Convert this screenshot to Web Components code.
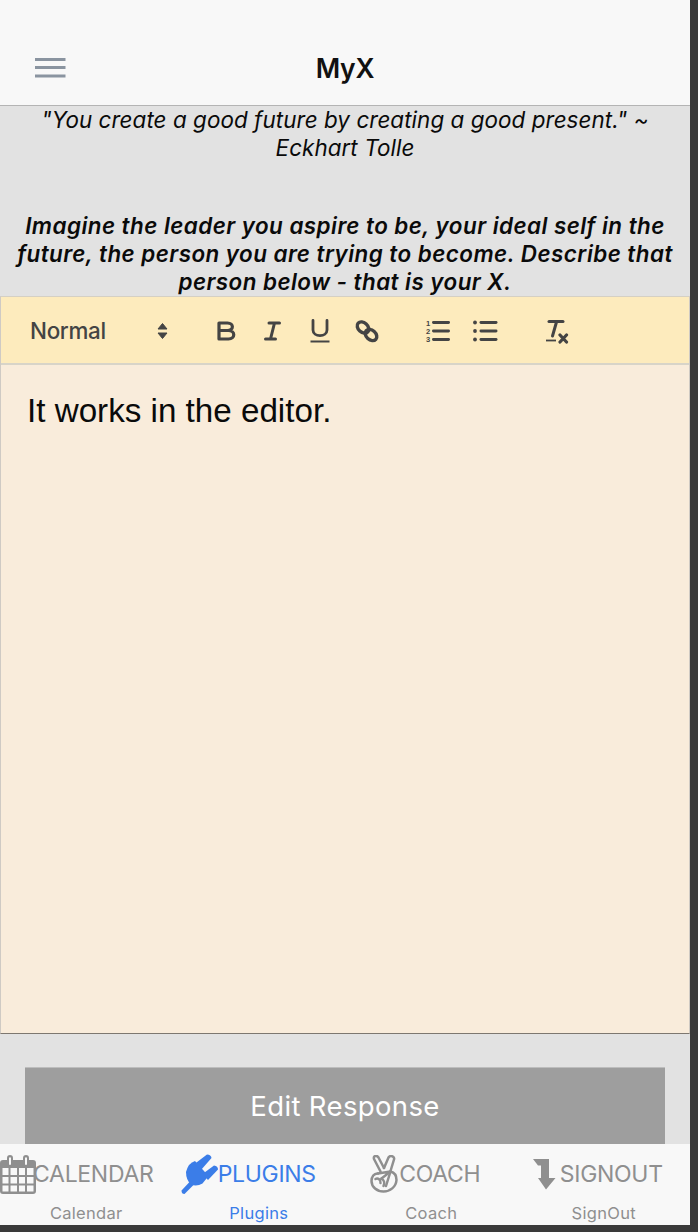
<!DOCTYPE html>
<html><head><meta charset="utf-8">
<style>
html,body{margin:0;padding:0;background:#3a3a3a;height:100%;overflow:hidden}
body{font-family:Inter,"Liberation Sans",sans-serif}
</style></head><body>
<my-app>
  <nav-header title="MyX"></nav-header>
  <quote-block>
    <p slot="quote">"You create a good future by creating a good present." ~ Eckhart Tolle</p>
    <p slot="prompt">Imagine the leader you aspire to be, your ideal self in the future, the person you are trying to become. Describe that person below - that is your X.</p>
  </quote-block>
  <rich-editor>It works in the editor.</rich-editor>
  <action-button>Edit Response</action-button>
  <tab-bar></tab-bar>
</my-app>
<script>
function def(name,html){
  customElements.define(name,class extends HTMLElement{
    constructor(){super();this.attachShadow({mode:'open'}).innerHTML=typeof html==='function'?html(this):html;}
    connectedCallback(){
      if(typeof html==='function')this.shadowRoot.innerHTML=html(this);
    }
  });
}
def('my-app',`<style>:host{display:flex;flex-direction:column;width:690px;height:1225px;background:#e2e2e2;overflow:hidden}</style><slot></slot>`);
def('nav-header',h=>`<style>
:host{display:flex;align-items:center;flex:none;box-sizing:border-box;height:106px;padding:31px 35px 0;background:#f8f8f8;border-bottom:1px solid #b4b4b4}
.m{display:block;flex:none}
h1{flex:1;margin:0 0 0 -31px;text-align:center;font:600 26.5px/1 Inter,"Liberation Sans",sans-serif;color:#111;letter-spacing:-.2px}
</style>
<svg class="m" width="31" height="21" viewBox="0 0 31 21"><g fill="#8a94a0"><rect y="0" width="30.5" height="3"/><rect y="8" width="30.5" height="3"/><rect y="16.5" width="30.5" height="3"/></g></svg>
<h1>${h.getAttribute('title')||''}</h1>`);
def('quote-block',`<style>
:host{display:block;flex:none;box-sizing:border-box;height:190px;padding:0 8px;text-align:center;color:#0a0a0a;font:italic 400 22.4px/28px Inter,"Liberation Sans",sans-serif;letter-spacing:.07px}
.q{height:106px}
.p{font-weight:600;letter-spacing:.47px}
::slotted(p){margin:0}
</style><div class="q"><slot name="quote"></slot></div><div class="p"><slot name="prompt"></slot></div>`);
const stroke='fill="none" stroke="#444" stroke-linecap="round" stroke-linejoin="round"';
def('rich-editor',`<style>
:host{display:flex;flex-direction:column;flex:none;box-sizing:border-box;height:738px;background:#f9ecdb;border:1px solid #cfcac4;border-bottom-color:#7d7770;border-top:1px solid #d5d0c4}
.bar{display:flex;align-items:center;flex:none;box-sizing:border-box;height:68px;padding-top:2px;background:#fdebbd;border-bottom:2px solid #d8d4c8;color:#444;padding-left:29px}
.sel{font:500 22.4px/1 Inter,"Liberation Sans",sans-serif;letter-spacing:-.3px;width:138px;display:flex;align-items:center;box-sizing:border-box}
.sel span{flex:1}
.tools{display:flex;align-items:center;margin-left:48px}
svg{display:block;flex:none}
.body{flex:1;padding:26px 26px;font:400 33.2px/40px "Liberation Sans",Arial,sans-serif;color:#0a0a0a}
</style>
<div class="bar">
<div class="sel"><span>Normal</span>
<svg width="11" height="18" viewBox="0 0 11 18"><path d="M5.500 1.500 L10 7 H1Z M5.500 16.500 L10 11 H1Z" fill="#444" stroke="#444" stroke-linejoin="round"/></svg></div>
<div class="tools">
<svg width="20" height="22" viewBox="0 0 20 22" ${stroke} stroke-width="3.2"><path d="M3 3H11.5C18 3 18 10.5 11.5 10.5H3Z M3 10.500H12.5C19.500 10.500 19.500 19 12.500 19H3Z"/></svg>
<svg style="margin-left:28px" width="17" height="22" viewBox="0 0 17 22" ${stroke} stroke-width="3"><path d="M5 3H15.5 M1.5 19H11.5 M10.5 3L6.5 19"/></svg>
<svg style="margin-left:28px" width="22" height="24" viewBox="0 0 22 24" ${stroke}><path d="M4 1.500V11C4 18.500 18 18.500 18 11V1.500" stroke-width="2.800"/><path d="M1.500 22.500H20.500" stroke-width="2" stroke-linecap="butt"/></svg>
<svg style="margin-left:24px" width="25" height="25" viewBox="0 0 25 25" ${stroke} stroke-width="3.400"><ellipse cx="8" cy="8.500" rx="6.500" ry="4.800" transform="rotate(42 8 8.500)"/><ellipse cx="16" cy="16" rx="6.500" ry="4.800" transform="rotate(42 16 16)"/></svg>
<svg style="margin-left:45px" width="26" height="24" viewBox="0 0 26 24"><g fill="#444"><rect x="7" y="2" width="18" height="3" rx="1.400"/><rect x="7" y="10.500" width="18" height="3" rx="1.400"/><rect x="7" y="19" width="18" height="3" rx="1.400"/></g><g font-family="Liberation Sans" font-size="7.500" font-weight="700" fill="#444" text-anchor="middle"><text x="3" y="6.500">1</text><text x="3" y="14.500">2</text><text x="3" y="23">3</text></g></svg>
<svg style="margin-left:22px" width="25" height="24" viewBox="0 0 25 24"><g fill="#444"><circle cx="2" cy="3.500" r="1.900"/><circle cx="2" cy="12" r="1.900"/><circle cx="2" cy="20.500" r="1.900"/><rect x="6.500" y="2" width="18" height="3" rx="1.400"/><rect x="6.500" y="10.500" width="18" height="3" rx="1.400"/><rect x="6.500" y="19" width="18" height="3" rx="1.400"/></g></svg>
<svg style="margin-left:47px" width="24" height="25" viewBox="0 0 24 25" ${stroke}><path d="M4 2.500H18" stroke-width="3"/><path d="M11.500 3L7.500 17" stroke-width="3"/><path d="M1 21.500H11" stroke-width="1.800" stroke-linecap="butt"/><path d="M15 16L21.500 23M21.500 16L15 23" stroke-width="3.200"/></svg>
</div></div>
<div class="body"><slot></slot></div>`);
def('action-button',`<style>
:host{display:flex;flex:none;box-sizing:border-box;height:110px;padding:33px 25px 0}
div{flex:1;display:flex;align-items:center;justify-content:center;box-sizing:border-box;padding-top:2px;background:#9e9e9e;color:#fff;font:400 27.5px/1 Inter,"Liberation Sans",sans-serif;letter-spacing:.35px;border-top:1px solid #bdbdbd}
</style><div><slot></slot></div>`);
const G='#8f8f8f',B='#3b7de8';
const icons={
cal:`<svg width="36" height="39" viewBox="0 0 36 39" style="margin-right:-3px"><path fill="${G}" fill-rule="evenodd" d="M3 5H7V3a3 3 0 0 1 6 0V5H23V3a3 3 0 0 1 6 0V5H33a3 3 0 0 1 3 3V36a3 3 0 0 1-3 3H3a3 3 0 0 1-3-3V8a3 3 0 0 1 3-3ZM9 2.500V9a1 1 0 0 0 2 0V2.500ZM25 2.500V9a1 1 0 0 0 2 0V2.500ZM2.500 13V20H8.500V13ZM10.500 13V20H17V13ZM19 13V20H25V13ZM27 13V20H33.500V13ZM2.500 22V28.500H8.500V22ZM10.500 22V28.500H17V22ZM19 22V28.500H25V22ZM27 22V28.500H33.500V22ZM2.500 30.500V36.500H8.500V30.500ZM10.500 30.500V36.500H17V30.500ZM19 30.500V36.500H25V30.500ZM27 30.500V36.500H33.500V30.500Z"/></svg>`,
plug:`<svg width="37" height="41" viewBox="0 0 37 41"><g fill="${B}"><path d="M0.500 36.500L9 27.500L12.500 31L3.500 40Q0.500 40 0.500 36.500Z"/><path d="M8 11Q11 8 14 7L27.500 22L21.500 29.500Q15.500 33 10 30.500Q5 26 5 18Q6 14 8 11Z"/><path d="M13.500 10L26 0.500Q30 0.500 30.500 4L20 16Z"/><path d="M21.500 20L33 11.500Q37 12 37 15.500L27 26Z"/></g></svg>`,
peace:`<svg width="28" height="38" viewBox="0 0 28 38" style="margin-left:1px;margin-right:1px" fill="none" stroke="${G}" stroke-width="2.500" stroke-linejoin="round" stroke-linecap="round"><path d="M10.500 16.500L4 4C3 0.500 7 0 8.500 2.500L14 13"/><path d="M14 13L18.500 2.500C20 0 25 1 24 4.500L20.500 16"/><path d="M20.500 16.500C24.500 17.500 26.500 21 26.500 25C26 32 20 36.500 13.500 36.500C7 36.500 1.500 32 1.500 26C1.500 22 4 18 8 18.500"/><path d="M8 18.500L20.500 16.500L11.500 23.500"/><path d="M5.500 24C8 22.500 11 25 10.500 28M11.500 23.500C14 25 15 28 13.500 31"/><path d="M20.500 16.500L16 31"/></svg>`,
down:`<svg width="23" height="32" viewBox="0 0 23 32" style="margin-right:4px"><path fill="${G}" d="M0 1H16V20H22.500L13 31.500L5 20H8V7.500H5Z"/></svg>`};
function tab(icon,big,small,active,mr){return `<div class="t${active?' a':''}"><div class="r" style="margin-right:${mr}px">${icons[icon]}<span class="big">${big}</span></div><span class="small">${small}</span></div>`}
def('tab-bar',`<style>
:host{display:grid;grid-template-columns:repeat(4,1fr);flex:none;height:81px;background:#f8f8f8}
.t{display:flex;flex-direction:column;align-items:center;color:${G};min-width:0}
.a{color:${B}}
.r{display:flex;align-items:center;height:40px;margin-top:10px;white-space:nowrap}
.big{font:400 23px/1 Inter,"Liberation Sans",sans-serif;letter-spacing:-.3px}
.small{font:400 16.500px/1 Inter,"Liberation Sans",sans-serif;margin-top:11px;letter-spacing:.3px}
svg{display:block;flex:none}
</style>`+tab('cal','CALENDAR','Calendar',false,19)+tab('plug','PLUGINS','Plugins',true,21)+tab('peace','COACH','Coach',false,13)+tab('down','SIGNOUT','SignOut',false,12));
</script>
</body></html>
